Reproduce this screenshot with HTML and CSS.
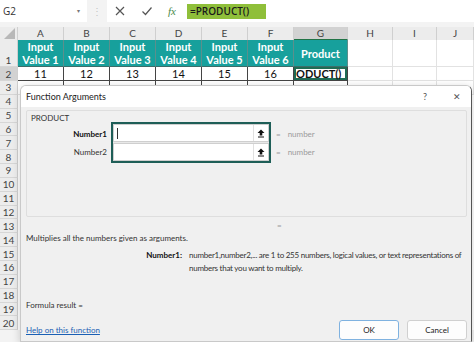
FILE: index.html
```html
<!DOCTYPE html>
<html lang="en">
<head>
  <meta charset="UTF-8" />
  <title>PRODUCT - Function Arguments</title>
  <link rel="stylesheet" href="styles.css">
</head>
<body>
  <div class="app">
    <div class="formula-bar">
      <div class="name-box"><span>G2</span><span class="caret">▾</span></div>
      <div class="grip">⋮</div>
      <div class="fx-box">
        <div class="fx-icons">
          <svg class="ico" width="12" height="12" viewBox="0 0 12 12"><path d="M2 2 L10 10 M10 2 L2 10" stroke="#555" stroke-width="1.2" fill="none"/></svg>
          <svg class="ico" width="12" height="12" viewBox="0 0 12 12"><path d="M1.5 6.5 L4.5 9.5 L10.5 2.5" stroke="#555" stroke-width="1.2" fill="none"/></svg>
          <span class="fx">fx</span>
        </div>
        <div class="formula"><span class="formula-text">=PRODUCT()</span></div>
      </div>
    </div>

    <div class="sheet">
      <div class="corner"><svg width="12" height="12" viewBox="0 0 12 12"><path d="M12 1 L12 12 L1 12 Z" fill="#b8b8b8"/></svg></div>
      <div class="col-head">A</div>
      <div class="col-head">B</div>
      <div class="col-head">C</div>
      <div class="col-head">D</div>
      <div class="col-head">E</div>
      <div class="col-head">F</div>
      <div class="col-head active">G</div>
      <div class="col-head">H</div>
      <div class="col-head">I</div>
      <div class="col-head">J</div>

      <div class="row-head bottom">1</div>
      <div class="cell title">Input<br>Value 1</div>
      <div class="cell title">Input<br>Value 2</div>
      <div class="cell title">Input<br>Value 3</div>
      <div class="cell title">Input<br>Value 4</div>
      <div class="cell title">Input<br>Value 5</div>
      <div class="cell title">Input<br>Value 6</div>
      <div class="cell title">Product</div>
      <div class="cell"></div>
      <div class="cell"></div>
      <div class="cell"></div>

      <div class="row-head active">2</div>
      <div class="cell value">11</div>
      <div class="cell value">12</div>
      <div class="cell value">13</div>
      <div class="cell value">14</div>
      <div class="cell value">15</div>
      <div class="cell value">16</div>
      <div class="cell value selected">ODUCT()</div>
      <div class="cell"></div>
      <div class="cell"></div>
      <div class="cell"></div>

      <div class="row-head">3</div>
      <div class="cell under"></div><div class="cell under"></div><div class="cell under"></div>
      <div class="cell under"></div><div class="cell under"></div><div class="cell under"></div>
      <div class="cell under"></div><div class="cell"></div><div class="cell"></div><div class="cell"></div>

      <div class="row-head">4</div><div class="blank"></div>
      <div class="row-head">5</div><div class="blank"></div>
      <div class="row-head">6</div><div class="blank"></div>
      <div class="row-head">7</div><div class="blank"></div>
      <div class="row-head">8</div><div class="blank"></div>
      <div class="row-head">9</div><div class="blank"></div>
      <div class="row-head">10</div><div class="blank"></div>
      <div class="row-head">11</div><div class="blank"></div>
      <div class="row-head">12</div><div class="blank"></div>
      <div class="row-head">13</div><div class="blank"></div>
      <div class="row-head">14</div><div class="blank"></div>
      <div class="row-head">15</div><div class="blank"></div>
      <div class="row-head">16</div><div class="blank"></div>
      <div class="row-head">17</div><div class="blank"></div>
      <div class="row-head">18</div><div class="blank"></div>
      <div class="row-head">19</div><div class="blank"></div>
      <div class="row-head">20</div><div class="blank"></div>
    </div>

    <div class="dialog">
      <div class="dialog-title">
        <span>Function Arguments</span>
        <span class="title-btns"><span class="help">?</span><span class="close">✕</span></span>
      </div>
      <div class="dialog-body">
        <div class="group">
          <div class="group-name">PRODUCT</div>
          <div class="args">
            <div class="arg-labels">
              <div class="arg-label strong">Number1</div>
              <div class="arg-label">Number2</div>
            </div>
            <div class="arg-inputs">
              <div class="arg-input"><span class="cursor"></span><span class="pick"><svg width="8" height="9" viewBox="0 0 8 9"><path d="M4 0.5 L7.5 4 L5.3 4 L5.3 6.5 L2.7 6.5 L2.7 4 L0.5 4 Z" fill="#111"/><rect x="1" y="7.5" width="6" height="1" fill="#111"/></svg></span></div>
              <div class="arg-input"><span class="pick"><svg width="8" height="9" viewBox="0 0 8 9"><path d="M4 0.5 L7.5 4 L5.3 4 L5.3 6.5 L2.7 6.5 L2.7 4 L0.5 4 Z" fill="#111"/><rect x="1" y="7.5" width="6" height="1" fill="#111"/></svg></span></div>
            </div>
            <div class="arg-results">
              <div class="arg-result"><span class="eq">=</span>number</div>
              <div class="arg-result"><span class="eq">=</span>number</div>
            </div>
          </div>
        </div>
        <div class="total-eq">=</div>
        <p class="summary">Multiplies all the numbers given as arguments.</p>
        <div class="arg-help">
          <div class="arg-help-name">Number1:</div>
          <div class="arg-help-text"><span class="line">number1,number2,... are 1 to 255 numbers, logical values, or text representations of</span><br>numbers that you want to multiply.</div>
        </div>
        <p class="result">Formula result =</p>
        <div class="dialog-foot">
          <a class="help-link" href="#">Help on this function</a>
          <div class="buttons">
            <button class="btn primary" type="button">OK</button>
            <button class="btn" type="button">Cancel</button>
          </div>
        </div>
      </div>
    </div>
  </div>
</body>
</html>
```

FILE: styles.css
```css
* {
  box-sizing: border-box;
}
body {
  margin: 0;
  background: #f3f3f3;
  font-family: 'Lato', 'Liberation Sans', sans-serif;
  overflow: hidden;
}
.app {
  position: relative;
  width: 474px;
  height: 342px;
  overflow: hidden;
}

/* formula bar */
.formula-bar {
  display: flex;
  height: 22px;
  background: #f3f3f3;
}
.name-box {
  width: 87px;
  padding: 0 7px 0 3px;
  background: #fff;
  display: flex;
  align-items: center;
  justify-content: space-between;
  font-family: 'Open Sans', sans-serif;
  font-size: 10px;
  color: #333;
}
.caret {
  font-size: 6px;
  color: #777;
}
.grip {
  width: 20px;
  text-align: center;
  color: #c4c4c4;
  font-size: 10px;
  line-height: 22px;
}
.fx-box {
  flex: 1;
  display: flex;
  align-items: center;
  background: #fff;
}
.fx-icons {
  width: 80px;
  display: flex;
  align-items: center;
  gap: 15px;
  padding-left: 7px;
}
.fx {
  font-family: 'Liberation Serif', serif;
  font-style: italic;
  font-size: 11px;
  color: #4a8a4a;
}
.formula {
  flex: 1;
  height: 22px;
  display: flex;
  align-items: center;
}
.formula-text {
  background: #8fbf3a;
  height: 15px;
  line-height: 15px;
  width: 79px;
  padding-left: 3px;
  font-family: 'Open Sans', sans-serif;
  font-weight: 600;
  font-size: 10px;
  color: #1a1a1a;
}

/* sheet grid */
.sheet {
  margin-top: 5px;
  display: grid;
  grid-template-columns: 18px repeat(6, 46px) 54px 45px 44px 37px;
  grid-template-rows: 13px 27px 14px;
  grid-auto-rows: 13.85px;
  background: #fff;
}
.corner {
  background: #ececec;
  display: flex;
  align-items: flex-end;
  justify-content: flex-end;
  padding: 0 2px 1px 0;
  border-right: 1px solid #d0d0d0;
}
.col-head {
  background: #ececec;
  border-right: 1px solid #cfcfcf;
  text-align: center;
  font-size: 10px;
  line-height: 13px;
  color: #444;
}
.col-head.active {
  background: #d2d2d2;
  border-bottom: 1px solid #217346;
}
.row-head {
  grid-column: 1;
  background: #ececec;
  border-bottom: 1px solid #d6d6d6;
  border-right: 1px solid #cfcfcf;
  text-align: center;
  font-size: 10px;
  color: #444;
  display: flex;
  align-items: center;
  justify-content: center;
}
.row-head.bottom {
  align-items: flex-end;
}
.row-head.active {
  background: #d2d2d2;
}
.blank {
  grid-column: 2 / -1;
}
.cell {
  border-right: 1px solid #e2e2e2;
  border-bottom: 1px solid #e2e2e2;
}
.title {
  background: #17a09c;
  color: #fff;
  font-weight: bold;
  font-size: 11px;
  line-height: 13px;
  text-align: center;
  display: flex;
  align-items: center;
  justify-content: center;
  border-right: 1px solid #5b8f8c;
  border-bottom: 1px solid #3d6d6a;
}
.value {
  font-size: 11px;
  line-height: 13px;
  text-align: center;
  color: #111;
  border-right: 1px solid #444;
  border-bottom: 1px solid #444;
}
.value.selected {
  text-align: left;
  font-weight: bold;
  padding-left: 2px;
  box-shadow: inset 0 0 0 2px #1f6b54;
}
.under {
  border-right: 1px solid #444;
}

/* dialog */
.dialog {
  position: absolute;
  left: 20px;
  top: 85px;
  width: 452px;
  height: 257px;
  background: #f0f0f0;
  border: 1px solid #c9c9c9;
  border-right: 1px solid #555;
  border-radius: 6px 6px 0 0;
  box-shadow: 0 2px 8px rgba(0,0,0,0.18);
  font-family: 'Lato', sans-serif;
  font-size: 8px;
  color: #222;
  overflow: hidden;
}
.dialog-title {
  height: 21px;
  background: #fff;
  display: flex;
  align-items: center;
  justify-content: space-between;
  padding: 0 10px 0 5px;
  font-size: 9px;
}
.title-btns {
  display: flex;
  gap: 26px;
  color: #555;
  font-size: 9px;
}
.dialog-body {
  padding: 3px 4px 0 5px;
}
.group {
  height: 107px;
  border: 1px solid #dedede;
  border-radius: 2px;
  padding: 2px 0 0 4px;
}
.group-name {
  color: #333;
}
.args {
  display: flex;
  margin-top: -1px;
}
.arg-labels {
  width: 76px;
  padding-top: 3px;
}
.arg-label {
  height: 18px;
  line-height: 18px;
  text-align: right;
  color: #333;
}
.arg-label.strong {
  font-weight: bold;
  color: #111;
}
.arg-inputs {
  margin-left: 4px;
  width: 160px;
  border: 2px solid #1e5e57;
  display: flex;
  flex-direction: column;
  gap: 1px;
  background: #e8e8e8;
}
.arg-input {
  height: 18px;
  background: #fff;
  border: 1px solid #cfcfcf;
  display: flex;
  justify-content: space-between;
  align-items: center;
}
.cursor {
  width: 1px;
  height: 11px;
  margin-left: 3px;
  background: #333;
}
.pick {
  margin-left: auto;
  width: 15px;
  height: 100%;
  border-left: 1px solid #e0e0e0;
  display: flex;
  align-items: center;
  justify-content: center;
}
.arg-results {
  padding-top: 3px;
  margin-left: 5px;
}
.arg-result {
  height: 18px;
  line-height: 18px;
  color: #9b9b9b;
}
.eq {
  margin-right: 7px;
}
.total-eq {
  margin-left: 251px;
  margin-top: 3px;
  color: #999;
}
.summary {
  margin: 3px 0 0;
  color: #333;
}
.arg-help {
  display: flex;
  margin-top: 6px;
  line-height: 13px;
}
.arg-help-name {
  width: 156px;
  flex-shrink: 0;
  text-align: right;
  font-weight: bold;
  color: #111;
}
.arg-help-text {
  margin-left: 7px;
  color: #333;
  letter-spacing: -0.25px;
}
.line {
  white-space: nowrap;
}
.result {
  margin: 25px 0 0;
  color: #333;
}
.dialog-foot {
  display: flex;
  align-items: center;
  justify-content: space-between;
  margin-top: 10px;
}
.help-link {
  color: #1a5fb4;
  text-decoration: underline;
}
.buttons {
  display: flex;
  gap: 8px;
}
.btn {
  width: 60px;
  height: 20px;
  background: #fdfdfd;
  border: 1px solid #d0d0d0;
  border-radius: 3px;
  font-family: 'Lato', sans-serif;
  font-size: 8px;
  color: #222;
}
.btn.primary {
  border-color: #7fb2e0;
}
```
